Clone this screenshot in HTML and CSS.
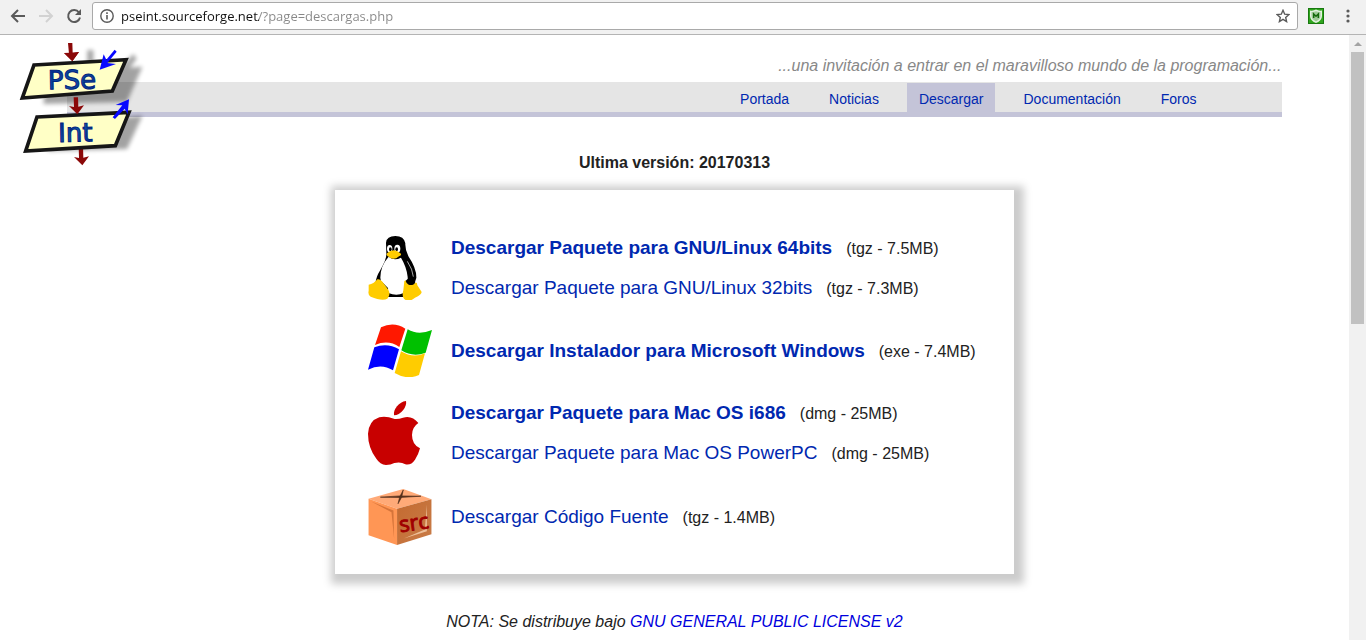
FILE: index.html
```
<!DOCTYPE html>
<html lang="es">
<head>
  <meta charset="UTF-8" />
  <title>PSeInt - Descargas</title>
  <link rel="stylesheet" href="styles.css">
</head>
<body>

<!-- Browser toolbar -->
<div class="toolbar">
  <button class="tool" type="button" aria-label="Atrás">
    <svg width="16" height="16" viewBox="0 0 16 16"><path d="M15 8H2M8 2L2 8l6 6" fill="none" stroke="#5a5a5a" stroke-width="2"/></svg>
  </button>
  <button class="tool" type="button" aria-label="Adelante" disabled>
    <svg width="16" height="16" viewBox="0 0 16 16"><path d="M1 8h13M8 2l6 6-6 6" fill="none" stroke="#d2d2d2" stroke-width="2"/></svg>
  </button>
  <button class="tool" type="button" aria-label="Recargar">
    <svg width="16" height="16" viewBox="0 0 16 16"><path d="M13 4.500A6 6 0 1 0 14 9.500" fill="none" stroke="#5a5a5a" stroke-width="2"/><path d="M15 1v6H9z" fill="#5a5a5a"/></svg>
  </button>
  <div class="address">
    <svg width="14" height="14" viewBox="0 0 14 14"><circle cx="7" cy="7" r="6.200" fill="none" stroke="#5a5a5a" stroke-width="1.400"/><path d="M7 6v4.500M7 3.300v1.600" stroke="#5a5a5a" stroke-width="1.600"/></svg>
    <input class="url" type="text" aria-label="Dirección" value="pseint.sourceforge.net/?page=descargas.php">
    <button class="star" type="button" aria-label="Marcador">
      <svg width="14" height="14" viewBox="0 0 14 14"><path d="M7 1.300l1.700 3.900 4.200.4-3.200 2.800.9 4.200L7 10.400l-3.600 2.200.9-4.200L1.100 5.600l4.200-.4z" fill="none" stroke="#5a5a5a" stroke-width="1.400"/></svg>
    </button>
  </div>
  <button class="tool shield" type="button" aria-label="Extensión">
    <svg width="16" height="16" viewBox="0 0 16 16"><rect x=".5" y=".5" width="15" height="15" fill="#2fa51d" stroke="#18790f"/><path d="M2 2.500q3.500.5 6-1 2.500 1.500 6 1V8q0 4.500-6 7-6-2.500-6-7z" fill="#e4f2e1"/><path d="M3.500 4q2.500.2 4.500-.8 2 1 4.500.8v4q0 3.500-4.500 5.400Q3.500 11.500 3.500 8z" fill="#9fcb98"/><path d="M5.700 10V6L8 8.300 10.300 6v4" fill="none" stroke="#14690c" stroke-width="1.500"/></svg>
  </button>
  <button class="tool menu" type="button" aria-label="Menú">
    <svg width="4" height="14" viewBox="0 0 4 14"><g fill="#5a5a5a"><circle cx="2" cy="2" r="1.600"/><circle cx="2" cy="7" r="1.600"/><circle cx="2" cy="12" r="1.600"/></g></svg>
  </button>
</div>

<div class="window">
  <div class="page">
    <a class="logo" href="#" aria-label="PSeInt">
      <svg width="150" height="140" viewBox="0 0 450 420">
        <defs>
          <filter id="soft" x="-20%" y="-20%" width="140%" height="140%"><feGaussianBlur stdDeviation="7"/></filter>
          <linearGradient id="ink" x1="0" y1="0" x2="1" y2="1"><stop offset="0" stop-color="#001f8c"/><stop offset=".5" stop-color="#1058a8"/><stop offset="1" stop-color="#001f8c"/></linearGradient>
        </defs>
        <g filter="url(#soft)" opacity=".36">
          <path d="M113 109l284-17-46 106-251 6z"/>
          <path d="M121 265l276-26-46 100-238 6z"/>
          <path d="M232 42h18v60h-18zM326 100l44-46 10 14-38 48z"/>
        </g>
        <!-- dark red flow arrows -->
        <g fill="#8b0808">
          <path d="M174 21h13l1 31 19-4-20 28-25-25 15 3z"/>
          <path d="M206 330h13l1 35 17-4-20 27-25-25 15 3z"/>
        </g>
        <g fill="#ffffc6" stroke="#161616" stroke-width="11">
          <path d="M72 87l276-16-41 94-270 21z"/>
          <path d="M81 243l276-14-41 100-269 16z"/>
        </g>
        <g fill="#8b0808">
          <path d="M179 50l28-2-20 28-25-25z"/>
          <path d="M191 184h13l1 28 17-4-20 27-25-25 15 3z"/>
        </g>
        <g fill="#0808ff">
          <path d="M314 41l6 6-28 34 26 3-49 17 12-46 8 16z"/>
          <path d="M308 244l29-36-20-1 40-17-4 45-9-17-29 31z"/>
        </g>
        <g class="logo-text" fill="url(#ink)" stroke="#00237f" stroke-width="3">
          <text x="114" y="160" font-size="78" transform="rotate(-1 114 160)">PSe</text>
          <text x="145" y="318" font-size="78" transform="rotate(-1 145 318)">Int</text>
        </g>
      </svg>
    </a>

    <header class="header">
      <p class="tagline">...una invitación a entrar en el maravilloso mundo de la programación...</p>
      <nav class="nav">
        <a href="#">Portada</a>
        <a href="#">Noticias</a>
        <a class="active" href="#">Descargar</a>
        <a href="#">Documentación</a>
        <a href="#">Foros</a>
      </nav>
    </header>

    <main class="main">
      <h1 class="version">Ultima versión: 20170313</h1>

      <div class="downloads">
        <section class="system">
          <svg width="54" height="64" viewBox="0 0 162 192">
            <path d="M54 20Q56 0 82 0t30 22q-1 20 10 40 24 35 23 64l-7 20-20 37H48l-25-35q-2-21 14-46 20-34 18-50z"/>
            <path d="M62 62q16 14 37 3 17 28 20 58 4 29-12 48-21 10-46 0-22-19-24-46 0-35 25-63z" fill="#fff"/>
            <path d="M40 136l20 20q2 8-6 4l-22-18z"/>
            <g fill="#fff"><ellipse cx="65" cy="38" rx="8" ry="11"/><ellipse cx="88" cy="38" rx="9" ry="12"/></g>
            <g><ellipse cx="67" cy="40" rx="4" ry="6"/><ellipse cx="86" cy="40" rx="4" ry="6"/></g>
            <path d="M57 52q20-18 40 0 6 4-4 9-15 14-30 2-10-5-6-11z" fill="#fc0"/>
            <path d="M36 90q-13 20-13 36M118 76q16 24 18 46" fill="none" stroke="#fff" stroke-width="2"/>
            <path d="M28 130q7-2 14 6l19 25q8 15-3 27-16 8-50-6-9-4-6-18v-18q15-2 26-16z" fill="#fc0"/>
            <path d="M109 135q8-5 10 8 10 9 23-3 6-2 6 8l13 20q0 8-20 17-20 17-33 3-7-8-2-25z" fill="#fc0"/>
            <path d="M113 134q12-14 28-3 3 14-11 16-13 0-17-13z"/>
          </svg>
          <ul class="files">
            <li><a class="main-file" href="#">Descargar Paquete para GNU/Linux 64bits</a><span>(tgz - 7.5MB)</span></li>
            <li><a href="#">Descargar Paquete para GNU/Linux 32bits</a><span>(tgz - 7.3MB)</span></li>
          </ul>
        </section>

        <section class="system">
          <svg width="64" height="53" viewBox="0 0 192 159">
            <path d="M39 10Q77-9 112 14L94 69Q61 46 21 63z" fill="#ff1800"/>
            <path d="M119 16q32 19 73 2l-19 68q-38 15-73-7z" fill="#00c000"/>
            <path d="M19 70q39-15 74 6L75 139Q40 117 0 137z" fill="#00f"/>
            <path d="M99 82q36 22 72 6l-18 65q-35 16-73-6z" fill="#fc0"/>
          </svg>
          <ul class="files">
            <li><a class="main-file" href="#">Descargar Instalador para Microsoft Windows</a><span>(exe - 7.4MB)</span></li>
          </ul>
        </section>

        <section class="system">
          <svg width="54" height="64" viewBox="0 0 162 192">
            <g fill="#c80000">
              <path d="M114 0q3 13-9 28-12 15-27 15-2-13 9-27Q98 2 114 0z"/>
              <path d="M80 54Q52 43 34 49 3 59 0 98q0 42 25 75 11 17 29 19 14 0 25-6 19-5 33 4 17 4 29-14 10-14 15-34-24-11-24-40 0-23 19-36Q132 42 105 50q-13 5-25 4z"/>
            </g>
          </svg>
          <ul class="files">
            <li><a class="main-file" href="#">Descargar Paquete para Mac OS i686</a><span>(dmg - 25MB)</span></li>
            <li><a href="#">Descargar Paquete para Mac OS PowerPC</a><span>(dmg - 25MB)</span></li>
          </ul>
        </section>

        <section class="system">
          <svg width="64" height="56" viewBox="0 0 192 171">
            <defs><linearGradient id="side" x1="0" y1="0" x2="1" y2="1"><stop offset="0" stop-color="#c46a30"/><stop offset="1" stop-color="#c87c48"/></linearGradient></defs>
            <path d="M0 30L106 0l86 31-105 29z" fill="#ffaa78"/>
            <path d="M0 30l87 30v111L0 141z" fill="#ff9655"/>
            <path d="M87 60l105-29v107L87 171z" fill="url(#side)"/>
            <path d="M8 38l68 28 2 86-8-81z" fill="#d6743a"/>
            <path d="M178 47v82l-70 22 64-27z" fill="#eec09a"/>
            <path d="M36 25l60-4 64 1-64 4zM106 3l-5 22-11 20 5-21z" fill="#54301c" stroke="#54301c" stroke-width="2"/>
            <text class="box-text" x="97" y="132" font-size="66" fill="#a00000" stroke="#a00000" stroke-width="3" transform="rotate(-8 97 132)">src</text>
          </svg>
          <ul class="files">
            <li><a href="#">Descargar Código Fuente</a><span>(tgz - 1.4MB)</span></li>
          </ul>
        </section>
      </div>

      <p class="note">NOTA: Se distribuye bajo <a href="#">GNU GENERAL PUBLIC LICENSE v2</a></p>
    </main>
  </div>

  <div class="scrollbar">
    <svg width="17" height="17" viewBox="0 0 17 17"><path d="M5 11l4-4 4 4z" fill="#a3a3a3"/></svg>
    <div class="thumb"></div>
  </div>
</div>

</body>
</html>
```
FILE: styles.css
```
* {
  box-sizing: border-box;
}
body {
  font-family: "Liberation Sans", Arial, sans-serif;
  font-size: 16px;
  line-height: 20px;
  margin: 0;
  height: 100vh;
  display: flex;
  flex-direction: column;
  overflow: hidden;
  background: white;
  color: #222;
}
svg {
  display: block;
}
a {
  color: #0028b0;
  text-decoration: none;
}
button {
  padding: 0;
  border: 0;
  background: none;
}

/* Browser toolbar */
.toolbar {
  display: flex;
  align-items: center;
  gap: 12px;
  height: 35px;
  padding: 0 16px 3px 10px;
  background: #f1f1f1;
  border-bottom: 1px solid #b4b4b4;
}
.address {
  flex: 1;
  display: flex;
  align-items: center;
  gap: 7px;
  height: 28px;
  margin-left: -2px;
  padding: 0 7px;
  background: white;
  border: 1px solid #a9a9a9;
  border-radius: 3px;
}
.url {
  flex: 1;
  padding: 0;
  border: 0;
  font-family: "Open Sans", "Noto Sans", sans-serif;
  font-size: 13px;
  color: transparent;
  /* host in black, path in grey */
  background: linear-gradient(to right, #111 138px, #888 138px);
  -webkit-background-clip: text;
  background-clip: text;
}
.shield {
  margin-left: -2px;
}
.menu {
  margin: 0 0 0 10px;
}

/* Page area */
.window {
  flex: 1;
  display: flex;
  min-height: 0;
}
.page {
  position: relative;
  flex: 1;
  overflow: hidden;
}
.logo {
  position: absolute;
  left: 10px;
  top: 1px;
}
.logo-text {
  font-family: "DejaVu Sans", sans-serif;
}
.box-text {
  font-family: "Open Sans", "Noto Sans", sans-serif;
}
.header {
  margin: 0 5%;
  padding-top: 21px;
}
.tagline {
  margin: 0;
  padding-bottom: 6px;
  text-align: right;
  font-style: italic;
  color: #888;
}
.nav {
  display: flex;
  justify-content: flex-end;
  gap: 16px;
  height: 35px;
  padding: 1px 73px 0 0;
  background: #e5e5e5;
  border-bottom: 5px solid #c4c4d8;
}
.nav a {
  padding: 6px 12px 0;
  font-size: 14px;
  line-height: 20px;
}
.nav .active {
  background: #c4c4d8;
}

/* Downloads */
.main {
  display: flex;
  flex-direction: column;
  align-items: center;
}
.version {
  margin: 36px 0 17px;
  font-size: 16px;
}
.downloads {
  display: flex;
  flex-direction: column;
  gap: 24px;
  width: 679px;
  max-width: 90%;
  padding: 46px 32px 29px 33px;
  background: white;
  box-shadow: 3px 3px 8px 7px #ccc;
}
.system {
  display: grid;
  grid-template-columns: 64px 1fr;
  column-gap: 19px;
  align-items: center;
}
.files {
  display: flex;
  flex-direction: column;
  gap: 16px;
  margin: 0;
  padding: 0;
  list-style: none;
}
.files li {
  height: 24px;
  line-height: 24px;
}
.files a {
  font-size: 19px;
}
.files .main-file {
  font-weight: bold;
}
.files span {
  margin-left: 14px;
}
.note {
  margin: 38px 0 0;
  font-style: italic;
}
.note a {
  color: #00d;
}

/* Scrollbar */
.scrollbar {
  width: 17px;
  background: #f1f1f1;
}
.thumb {
  width: 13px;
  height: 45%;
  margin: 0 auto;
  background: #c1c1c1;
}
```
